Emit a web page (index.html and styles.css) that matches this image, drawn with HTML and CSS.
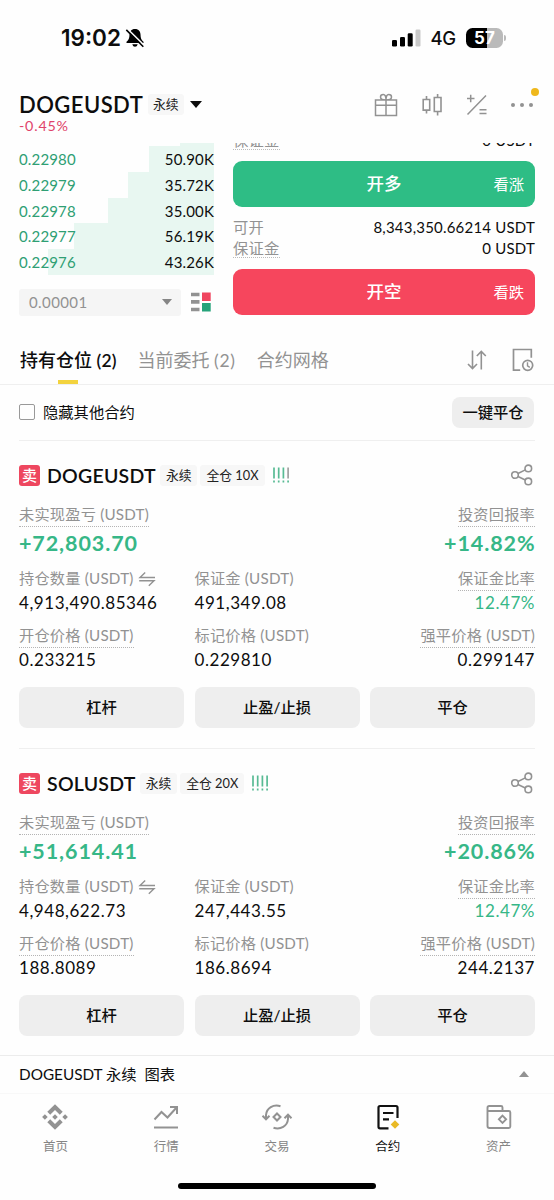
FILE: index.html
```html
<!DOCTYPE html>
<html lang="zh-CN">
<head>
<meta charset="utf-8">
<title>DOGEUSDT 永续</title>
<link rel="stylesheet" href="styles.css">
</head>
<body>
<svg class="defs" aria-hidden="true">
  <symbol id="share" viewBox="0 0 24 24"><g fill="none" stroke="#929292" stroke-width="1.6"><circle cx="5" cy="12" r="3.3"/><circle cx="18.3" cy="5.4" r="3.3"/><circle cx="18.3" cy="18.4" r="3.3"/><path d="M8 10.5l7.3-3.6M8 13.5l7.3 3.5"/></g></symbol>
  <symbol id="swap" viewBox="0 0 18 16"><path d="M17 6.500H2L7.200 1.600M1.200 9.800H16l-5.200 4.900" fill="none" stroke="#929292" stroke-width="1.400"/></symbol>
  <symbol id="risk" viewBox="0 0 18 18"><path d="M2 1.500v11M6.700 1.500v11M11.400 1.500v11M2 14.500v2M6.700 14.500v2M11.400 14.500v2M16.100 14.500v2" stroke="#58bb94" stroke-width="1.700"/><path d="M16.100 1.500v11" stroke="currentColor" stroke-width="1.700"/></symbol>
</svg>
<div class="phone">
  <header class="status">
    <div class="clock"><span>19:02</span>
      <svg width="20" height="20" viewBox="0 0 20 20"><path d="M10 1C6.200 1 4.500 3.500 4.500 6.500c0 4-1 5.500-3 7.300V15h17v-1.200c-2-1.800-3-3.300-3-7.300C15.500 3.500 13.800 1 10 1zM7.300 16.300c.5 1.700 1.400 2.500 2.700 2.500s2.200-.8 2.700-2.500z"/><path d="M2.600 1.100l16.600 16.300" stroke="#fff" stroke-width="1.500"/><path d="M1.300 1.900l17 16.800" stroke="#000" stroke-width="1.600"/></svg>
    </div>
    <div class="signal">
      <svg width="29" height="18" viewBox="0 0 29 18"><rect x="0" y="11" width="5" height="6.500" rx="1.300"/><rect x="8" y="8" width="5" height="9.500" rx="1.300"/><rect x="15.700" y="4.300" width="5" height="13.200" rx="1.300"/><rect x="23.500" y="0.500" width="5" height="17" rx="1.300" fill="#c9c9c9"/></svg>
      <span class="network">4G</span>
      <div class="battery"><span>57</span></div><i class="battery-tip"></i>
    </div>
  </header>

  <div class="pair">
    <div class="pair-info">
      <div class="pair-line"><h1>DOGEUSDT</h1><span class="tag">永续</span><i class="caret"></i></div>
      <div class="change">-0.45%</div>
    </div>
    <div class="tools">
      <svg width="24" height="24" viewBox="0 0 24 24" fill="none" stroke="#929292" stroke-width="1.500"><path d="M1.500 7h21v15.500h-21zM1.500 12.300h21M12 7v15.500M12 7C8 7 6.500 5.500 6.500 4S8 1.500 9.300 1.500C11 1.500 12 3 12 7zm0 0c4 0 5.500-1.500 5.500-3S16 1.500 14.700 1.500C13 1.500 12 3 12 7z"/></svg>
      <svg width="22" height="24" viewBox="0 0 22 24" fill="none" stroke="#929292" stroke-width="1.600"><path d="M2.200 6.500h6.500v10.600H2.200zM5.500 3v3.500M5.500 17.100v3.500M13.300 4.500h6.700v14h-6.700zM16.600 1v3.500M16.600 18.500v4"/></svg>
      <svg width="22" height="24" viewBox="0 0 22 24" fill="none" stroke="#929292" stroke-width="1.500"><path d="M1.500 21.500l18.500-19M1 5.500h7.500M4.700 1.800v7.500M13.500 16.800h7M13.500 20.500h7"/></svg>
      <div class="more"><i></i><i></i><i></i><b></b></div>
    </div>
  </div>

  <section class="market">
    <div class="book">
      <div class="book-top"><i style="width:17.300%"></i></div>
      <div class="level"><i style="width:33.300%"></i><span>0.22980</span><span>50.90K</span></div>
      <div class="level"><i style="width:44.100%"></i><span>0.22979</span><span>35.72K</span></div>
      <div class="level"><i style="width:54.500%"></i><span>0.22978</span><span>35.00K</span></div>
      <div class="level"><i style="width:72%"></i><span>0.22977</span><span>56.19K</span></div>
      <div class="level"><i style="width:85%"></i><span>0.22976</span><span>43.26K</span></div>
      <div class="precision">
        <div class="select"><span>0.00001</span><i class="caret"></i></div>
        <svg width="20" height="20" viewBox="0 0 20 20"><path d="M0 .8h8.500v3.500H0zM0 8h8.500v3.700H0zM0 15.800h8.500v3.500H0z" fill="#929292"/><path d="M11 .5h8.700v8.500H11z" fill="#f0455f"/><path d="M11 11h8.700v8.500H11z" fill="#26a37a"/></svg>
      </div>
    </div>
    <div class="order">
      <div class="info margin"><label>保证金</label><span>0 USDT</span></div>
      <button class="trade long"><span>开多</span><small>看涨</small></button>
      <div class="info"><label>可开</label><span>8,343,350.66214 USDT</span></div>
      <div class="info margin"><label>保证金</label><span>0 USDT</span></div>
      <button class="trade short"><span>开空</span><small>看跌</small></button>
    </div>
  </section>

  <nav class="tabs">
    <span class="tab active">持有仓位 <em>(2)</em></span>
    <span class="tab">当前委托 <em>(2)</em></span>
    <span class="tab">合约网格</span>
    <div class="tab-tools">
      <svg width="20" height="22" viewBox="0 0 20 22" fill="none" stroke="#929292" stroke-width="1.600"><path d="M5.500 1.500v18M1 15l4.500 4.600L10 15M14.300 20.500v-18M9.800 7l4.500-4.600L18.800 7"/></svg>
      <svg width="22" height="24" viewBox="0 0 22 24" fill="none" stroke="#929292" stroke-width="1.700"><path d="M8.200 22.200H1.500V1.500h17.800v8.200"/><circle cx="15.700" cy="17.300" r="5"/><path d="M15.500 14.200v3.600l2.300 1.500" stroke-width="1.400"/></svg>
    </div>
  </nav>

  <div class="filter"><i class="checkbox"></i><span>隐藏其他合约</span><button>一键平仓</button></div>

  <article class="position">
    <div class="position-head"><b class="side">卖</b><h2>DOGEUSDT</h2><span class="tag">永续</span><span class="tag">全仓 10X</span><svg class="risk partial"><use href="#risk"/></svg><svg class="share"><use href="#share"/></svg></div>
    <div class="pnl">
      <div><label class="hint">未实现盈亏 (USDT)</label><strong>+72,803.70</strong></div>
      <div><label class="hint">投资回报率</label><strong>+14.82%</strong></div>
    </div>
    <div class="metrics">
      <div><label>持仓数量 (USDT)<svg class="swap"><use href="#swap"/></svg></label><span>4,913,490.85346</span></div>
      <div><label>保证金 (USDT)</label><span>491,349.08</span></div>
      <div><label class="hint">保证金比率</label><span class="up">12.47%</span></div>
      <div><label class="hint">开仓价格 (USDT)</label><span>0.233215</span></div>
      <div><label>标记价格 (USDT)</label><span>0.229810</span></div>
      <div><label class="hint">强平价格 (USDT)</label><span>0.299147</span></div>
    </div>
    <div class="actions"><button>杠杆</button><button>止盈/止损</button><button>平仓</button></div>
  </article>

  <article class="position">
    <div class="position-head"><b class="side">卖</b><h2>SOLUSDT</h2><span class="tag">永续</span><span class="tag">全仓 20X</span><svg class="risk"><use href="#risk"/></svg><svg class="share"><use href="#share"/></svg></div>
    <div class="pnl">
      <div><label class="hint">未实现盈亏 (USDT)</label><strong>+51,614.41</strong></div>
      <div><label class="hint">投资回报率</label><strong>+20.86%</strong></div>
    </div>
    <div class="metrics">
      <div><label>持仓数量 (USDT)<svg class="swap"><use href="#swap"/></svg></label><span>4,948,622.73</span></div>
      <div><label>保证金 (USDT)</label><span>247,443.55</span></div>
      <div><label class="hint">保证金比率</label><span class="up">12.47%</span></div>
      <div><label class="hint">开仓价格 (USDT)</label><span>188.8089</span></div>
      <div><label>标记价格 (USDT)</label><span>186.8694</span></div>
      <div><label class="hint">强平价格 (USDT)</label><span>244.2137</span></div>
    </div>
    <div class="actions"><button>杠杆</button><button>止盈/止损</button><button>平仓</button></div>
  </article>

  <div class="chart-bar"><span>DOGEUSDT 永续&nbsp; 图表</span><i class="caret"></i></div>

  <footer>
    <nav class="bottom">
      <a><svg width="28" height="28" viewBox="0 0 28 28" fill="#929292"><path d="M14 1.200l7.700 7.600-2.900 2.900L14 7l-4.800 4.700-2.900-2.900zM14 26.800l7.700-7.600-2.900-2.900L14 21l-4.800-4.700-2.900 2.900zM14 11.200l2.800 2.800-2.800 2.800-2.800-2.800zM3.900 11.200L6.700 14l-2.800 2.800L1.100 14zM24.100 11.200l2.800 2.800-2.800 2.800-2.800-2.800z"/></svg>首页</a>
      <a><svg width="28" height="28" viewBox="0 0 28 28" fill="none" stroke="#929292" stroke-width="2"><path d="M2 24.500h24M2.500 16.500l7-7.500 6 5.500L25 4M18 4h7v7"/></svg>行情</a>
      <a><svg width="32" height="28" viewBox="0 0 32 28" fill="none" stroke="#929292" stroke-width="2"><path d="M19.500 3.200C12.500.8 5.500 5 5 12v4M1.500 12.800L5 16.300l3.500-3.500M12.500 24.800c7 2.400 14-1.800 14.500-8.800v-4M23.500 15.200l3.500-3.500 3.500 3.500"/><path d="M16 10.500l3.500 3.500-3.500 3.500-3.500-3.500z"/></svg>交易</a>
      <a class="current"><svg width="28" height="28" viewBox="0 0 28 28" fill="none" stroke="#111" stroke-width="2.200"><path d="M14.500 25.300H6q-1.500 0-1.500-1.500V4.500Q4.500 3 6 3h16q1.500 0 1.500 1.500V15M9 10h10.500M9 16.300h6"/><path d="M21 17.200l4.300 4.300-4.300 4.300-4.300-4.300z" fill="#e9ba26" stroke="none"/></svg>合约</a>
      <a><svg width="28" height="28" viewBox="0 0 28 28" fill="none" stroke="#929292" stroke-width="1.900"><path d="M2.500 8V4.800q0-1.800 1.800-1.800H16q1.500 0 1.500 1.500V8h6.300q1.500 0 1.500 1.500v14q0 1.500-1.500 1.500H4.500q-2 0-2-2zM2.500 8h15"/><path d="M17.500 12.700l3.600 3.600-3.600 3.600-3.600-3.600z"/></svg>资产</a>
    </nav>
    <div class="home-bar"></div>
  </footer>
</div>
</body>
</html>
```
FILE: styles.css
```css
* { box-sizing: border-box; }
body { margin: 0; background: #fefefe; color: #0d0d0d; font-family: Lato, "Noto Sans CJK SC", sans-serif; }
button { border: 0; padding: 0; font: inherit; color: inherit; }
h1, h2 { margin: 0; font-weight: 600; }
i, em { font-style: normal; }
svg { display: block; flex: none; }
.defs { position: absolute; width: 0; height: 0; }
.phone { width: 554px; height: 1200px; display: flex; flex-direction: column; overflow: hidden; }
.phone > * { flex: none; }

.status { height: 76px; padding: 0 48px 0 61px; display: flex; align-items: center; justify-content: space-between; font-family: Inter, sans-serif; }
.clock { display: flex; align-items: center; gap: 4px; font-size: 22.5px; font-weight: 600; line-height: 26px; }
.signal { display: flex; align-items: center; }
.network { margin-left: 9px; font-size: 18.5px; letter-spacing: -.2px; font-weight: 500; }
.battery { margin-left: 10px; width: 37px; height: 20px; border-radius: 6.5px; background: linear-gradient(90deg, #000 57%, #bababa 57%); color: #fff; text-align: center; font-size: 17px; font-weight: 700; line-height: 20px; }
.battery-tip { width: 2px; height: 6px; margin-left: 1px; border-radius: 0 2px 2px 0; background: #bababa; }

.pair { height: 67px; padding: 15px 21px 0 19px; display: flex; justify-content: space-between; }
.pair-line { display: flex; align-items: center; height: 27px; }
.pair h1 { font-size: 22px; letter-spacing: .45px; width: 124px; white-space: nowrap; }
.tag { height: 21px; padding: 0 6px; border-radius: 3px; background: #f7f7f7; font-size: 12.8px; line-height: 20px; color: #222; white-space: nowrap; }
.pair .tag { margin-left: 5px; padding: 0 5px; }
.caret { width: 0; height: 0; border: 6px solid transparent; border-top: 7.5px solid #0d0d0d; border-bottom: 0; }
.pair .caret { margin-left: 6px; }
.change { font-size: 14.3px; line-height: 15px; letter-spacing: .8px; color: #e0426a; }
.tools { display: flex; align-items: center; height: 27px; gap: 23px; }
.more { position: relative; width: 22px; display: flex; gap: 5px; }
.more i { width: 4px; height: 4px; border-radius: 2px; background: #929292; }
.more b { position: absolute; right: -6px; top: -15px; width: 8px; height: 8px; border-radius: 4px; background: #efb81c; }

.market { height: 187px; padding: 0 19px; display: flex; justify-content: space-between; overflow: hidden; }
.book { width: 195px; }
.book-top { height: 3px; display: flex; justify-content: flex-end; }
.book-top i { background: #e8f7f1; }
.level { position: relative; height: 25.8px; display: flex; justify-content: space-between; font-size: 15px; line-height: 26px; letter-spacing: .15px; }
.level i { position: absolute; right: 0; top: 0; bottom: 0; background: #e8f7f1; }
.level span { position: relative; }
.level span:nth-child(2) { color: #2f9f74; }
.precision { margin-top: 14px; display: flex; justify-content: space-between; align-items: center; padding-right: 3px; }
.select { width: 162px; height: 27px; padding: 0 9px 0 10px; display: flex; align-items: center; justify-content: space-between; border-radius: 3px; background: #f5f5f5; color: #929292; font-size: 15px; letter-spacing: .4px; }
.select .caret { border-width: 6px 5.5px 0; border-top-color: #858585; }
.order { width: 302px; margin-top: -14px; }
.info { height: 20px; display: flex; justify-content: space-between; font-size: 15px; line-height: 20px; letter-spacing: .2px; }
.info label { color: #929292; font-size: 15.3px; }
.info.margin { height: 21px; line-height: 22px; }
.info.margin label { height: 21px; border-bottom: 1px dotted #bbb; }
.trade { width: 302px; height: 46px; padding-bottom: 3px; border-radius: 9px; display: grid; grid-template-columns: 1fr auto 1fr; align-items: center; color: #fff; }
.trade span { grid-column: 2; font-size: 17.5px; font-weight: 500; }
.trade small { justify-self: end; padding-right: 11px; font-size: 15.3px; }
.long { background: #2ebd85; margin: 11px 0 10px; }
.short { background: #f6465d; margin-top: 11px; }

.tabs { height: 55px; padding: 0 20px; display: flex; align-items: center; border-bottom: 1px solid #efefef; font-size: 18px; color: #929292; }
.tab { position: relative; height: 54px; line-height: 60px; margin-right: 21px; white-space: nowrap; }
.tab em { font-size: 17.5px; letter-spacing: .7px; }
.active { color: #0d0d0d; font-weight: 500; }
.active em { font-weight: 600; letter-spacing: .1px; }
.active::after { content: ""; position: absolute; left: 50%; margin-left: -10px; bottom: 0; width: 20px; height: 4px; background: #f3d33e; }
.tab-tools { margin-left: auto; padding-top: 6px; display: flex; gap: 25px; align-items: center; }

.filter { height: 55px; margin: 0 19px; display: flex; align-items: center; font-size: 15.3px; }
.filter span { padding-bottom: 4px; }
.checkbox { width: 16px; height: 16px; border: 1px solid #999; border-radius: 2px; margin: -2px 8px 0 0; }
.filter button { margin: 0 1px 0 auto; width: 82px; height: 31px; padding-bottom: 3px; border-radius: 8px; background: #eee; font-weight: 500; }

.position { height: 308px; margin: 0 19px; border-top: 1px solid #efefef; }
.position-head { height: 62px; padding-top: 6px; display: flex; align-items: center; }
.side { width: 21px; height: 21px; border-radius: 3px; background: #ee475f; color: #fff; font-size: 15px; font-weight: 500; line-height: 20px; text-align: center; }
.position h2 { margin: 0 4px 0 7px; font-size: 19.5px; letter-spacing: .25px; font-weight: 600; }
.position .tag + .tag { margin-left: 3px; }
.risk { width: 18px; height: 18px; margin-left: 7px; color: #58bb94; }
.risk.partial { color: #a0a0a0; }
.share { width: 24px; height: 24px; margin: 0 1px 0 auto; }
.pnl { display: flex; justify-content: space-between; }
.pnl > div, .metrics > div { display: flex; flex-direction: column; align-items: flex-start; }
.pnl > div:last-child, .metrics > div:nth-child(3n) { align-items: flex-end; }
.position label { height: 24px; padding-bottom: 2px; display: flex; align-items: center; line-height: 22px; font-size: 15.2px; letter-spacing: .22px; color: #929292; white-space: pre; border-bottom: 1px solid transparent; }
.position label.hint { border-bottom: 1px dotted #b4b4b4; }
.pnl strong { height: 40px; line-height: 32px; font-size: 21.5px; letter-spacing: .9px; margin-right: -.5px; color: #36b787; }
.swap { width: 18px; height: 16px; margin: 2px 0 0 4px; }
.metrics { display: grid; grid-template-columns: repeat(3, 1fr); column-gap: 10.5px; row-gap: 9px; }
.metrics span { height: 24px; line-height: 24px; font-size: 17px; letter-spacing: .55px; }
.metrics span.up { color: #36b787; }
.actions { margin-top: 15px; display: grid; grid-template-columns: repeat(3, 1fr); gap: 10.5px; }
.actions button { height: 41px; padding-bottom: 3px; border-radius: 8px; background: #eee; font-size: 15.3px; font-weight: 500; }

.chart-bar { height: 38px; margin-top: -1px; padding: 0 25px 0 19px; border-top: 1px solid #ececec; display: flex; align-items: center; justify-content: space-between; font-size: 15.3px; }
.chart-bar span { padding-bottom: 4px; }
.chart-bar .caret { border-width: 0 5px 6px; border-bottom: 6px solid #929292; border-top: 0; margin-top: -2px; }
footer { border-top: 1px solid #f8f8f8; flex: 1; display: flex; flex-direction: column; align-items: center; }
.bottom { width: 100%; padding-top: 9px; display: grid; grid-template-columns: repeat(5, 1fr); }
.bottom a { display: flex; flex-direction: column; align-items: center; gap: 6px; font-size: 12.5px; line-height: 19px; color: #858585; }
.bottom .current { color: #111; }
.home-bar { width: 198px; height: 6px; margin-top: 27px; border-radius: 3px; background: #000; }
```
